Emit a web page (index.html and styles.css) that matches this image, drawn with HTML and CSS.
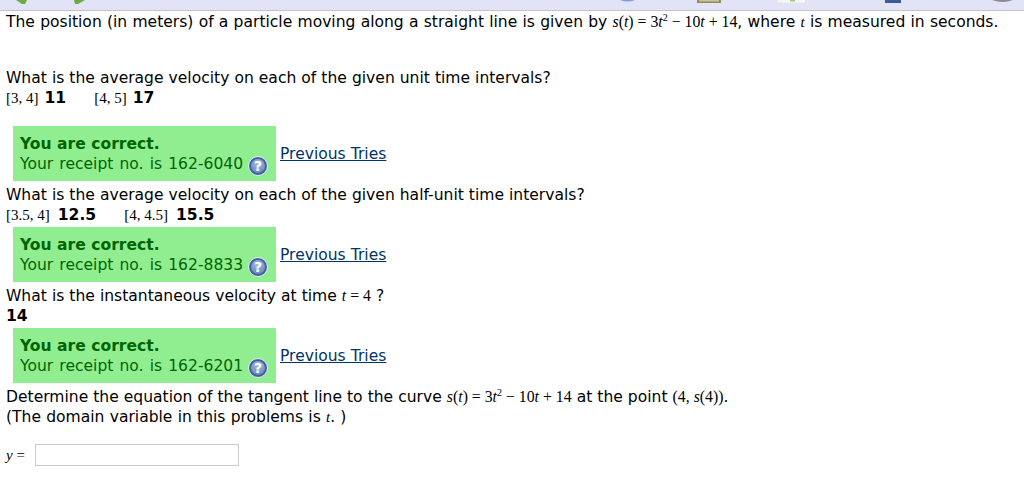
FILE: index.html
```html
<!DOCTYPE html>
<html lang="en">
<head>
    <meta charset="UTF-8">
    <title>Problem</title>
    <link rel="stylesheet" href="styles.css">
</head>
<body>
    <div class="toolbar">
        <!-- only the bottom edge of the browser's toolbar buttons shows -->
        <svg width="1024" height="10" viewBox="0 0 1024 10">
            <path d="M16 0 L27 0 L25 4 L22 4 Z" fill="#6cab3e"/>
            <path d="M74 0 L85 0 L78 4 L75 4 Z" fill="#6cab3e"/>
            <path d="M620 0 H635 Q628 3 620 0 Z" fill="#7f9fe0"/>
            <rect x="697" y="0" width="24" height="3" fill="#8d8a62"/>
            <rect x="699" y="0" width="20" height="1.5" fill="#c9c390"/>
            <rect x="778" y="0" width="27" height="2.5" rx="1" fill="#f7f7f2"/>
            <rect x="790" y="0" width="5" height="1.5" fill="#9cc98a"/>
            <rect x="885" y="0" width="16" height="3" fill="#3c5a98"/>
            <path d="M992 0 H1013 Q1003 4 992 0 Z" fill="#8a8a8f"/>
        </svg>
    </div>
    <div class="problem">
        <p class="line wide intro">The position (in meters) of a particle moving along a straight line is given by <span class="math formula"><i>s</i>(<i>t</i>) = 3<i>t</i><sup>2</sup> &minus; 10<i>t</i> + 14</span>, where <i class="math">t</i> is measured in seconds.</p>

        <p class="line">What is the average velocity on each of the given unit time intervals?</p>
        <p class="line"><span class="math interval">[3, 4]</span> <b>11</b> <span class="math interval second">[4, 5]</span> <b>17</b></p>
        <div class="result first">
            <div class="correct">
                <b>You are correct.</b><br>
                <span class="receipt">Your receipt no. is 162-6040</span> <span class="help">?</span>
            </div>
            <a href="#">Previous Tries</a>
        </div>

        <p class="line">What is the average velocity on each of the given half-unit time intervals?</p>
        <p class="line"><span class="math interval long">[3.5, 4]</span> <b>12.5</b> <span class="math interval long second">[4, 4.5]</span> <b>15.5</b></p>
        <div class="result">
            <div class="correct">
                <b>You are correct.</b><br>
                <span class="receipt">Your receipt no. is 162-8833</span> <span class="help">?</span>
            </div>
            <a href="#">Previous Tries</a>
        </div>

        <p class="line">What is the instantaneous velocity at time <span class="math formula"><i>t</i> = 4</span> ?</p>
        <p class="line"><b>14</b></p>
        <div class="result">
            <div class="correct">
                <b>You are correct.</b><br>
                <span class="receipt">Your receipt no. is 162-6201</span> <span class="help">?</span>
            </div>
            <a href="#">Previous Tries</a>
        </div>

        <p class="line">Determine the equation of the tangent line to the curve <span class="math formula"><i>s</i>(<i>t</i>) = 3<i>t</i><sup>2</sup> &minus; 10<i>t</i> + 14</span> at the point <span class="math formula">(4, <i>s</i>(4))</span>.</p>
        <p class="line wide">(The domain variable in this problems is <i class="math">t</i>. )</p>
        <div class="answer-row">
            <span class="math"><i>y</i> =</span>
            <input type="text" class="answer-box">
        </div>
    </div>
</body>
</html>
```

FILE: styles.css
```css
body {
    margin: 0;
    background: #fff;
    color: #000;
    font-family: "DejaVu Sans", Verdana, sans-serif;
    font-size: 15.56px;
    word-spacing: 0.1px;
}
.toolbar {
    height: 10px;
    background-color: #e3e3f8;
    border-bottom: 1px solid #c4c4c8;
    overflow: hidden;
}
.toolbar svg {
    display: block;
}
.problem {
    padding: 0 6px;
}
.line {
    margin: 0;
    height: 20px;
    line-height: 22px;
    white-space: nowrap;
}
.wide {
    word-spacing: 0.3px;
}
.intro {
    margin-bottom: 36px;
}
.math {
    font-family: "Liberation Serif", "Times New Roman", serif;
    font-size: 15px;
    word-spacing: 0;
}
.formula {
    font-size: 15.8px;
}
.math sup {
    font-size: 10px;
    line-height: 0;
}
.interval {
    margin-right: 1px;
}
.long {
    margin-right: 3px;
}
.second {
    margin-left: 23px;
}
.result {
    display: flex;
    align-items: center;
    margin: 3px 0 3px 7px;
}
.first {
    margin-top: 19px;
}
.correct {
    width: 263px;
    height: 55px;
    padding: 8px 0 0 7px;
    box-sizing: border-box;
    background-color: #90ee90;
    color: #006400;
    line-height: 20px;
    white-space: nowrap;
}
.receipt {
    word-spacing: 1.2px;
}
.result a {
    margin-left: 4px;
    color: #003366;
}
.help {
    display: inline-block;
    width: 20px;
    height: 20px;
    border-radius: 50%;
    border: 1px solid #dfe7f0;
    box-shadow: inset 0 0 0 2px #3f619f;
    box-sizing: border-box;
    background: radial-gradient(circle at 50% 35%, #a9bedd, #4a6ca8);
    color: #fff;
    font-size: 14px;
    font-weight: bold;
    line-height: 18px;
    text-align: center;
    vertical-align: -2px;
}
.answer-row {
    display: flex;
    align-items: center;
    margin-top: 18px;
}
.answer-box {
    width: 204px;
    height: 22px;
    margin: 0 0 0 10px;
    padding: 0;
    box-sizing: border-box;
    border: 1px solid #ccc;
}
```
